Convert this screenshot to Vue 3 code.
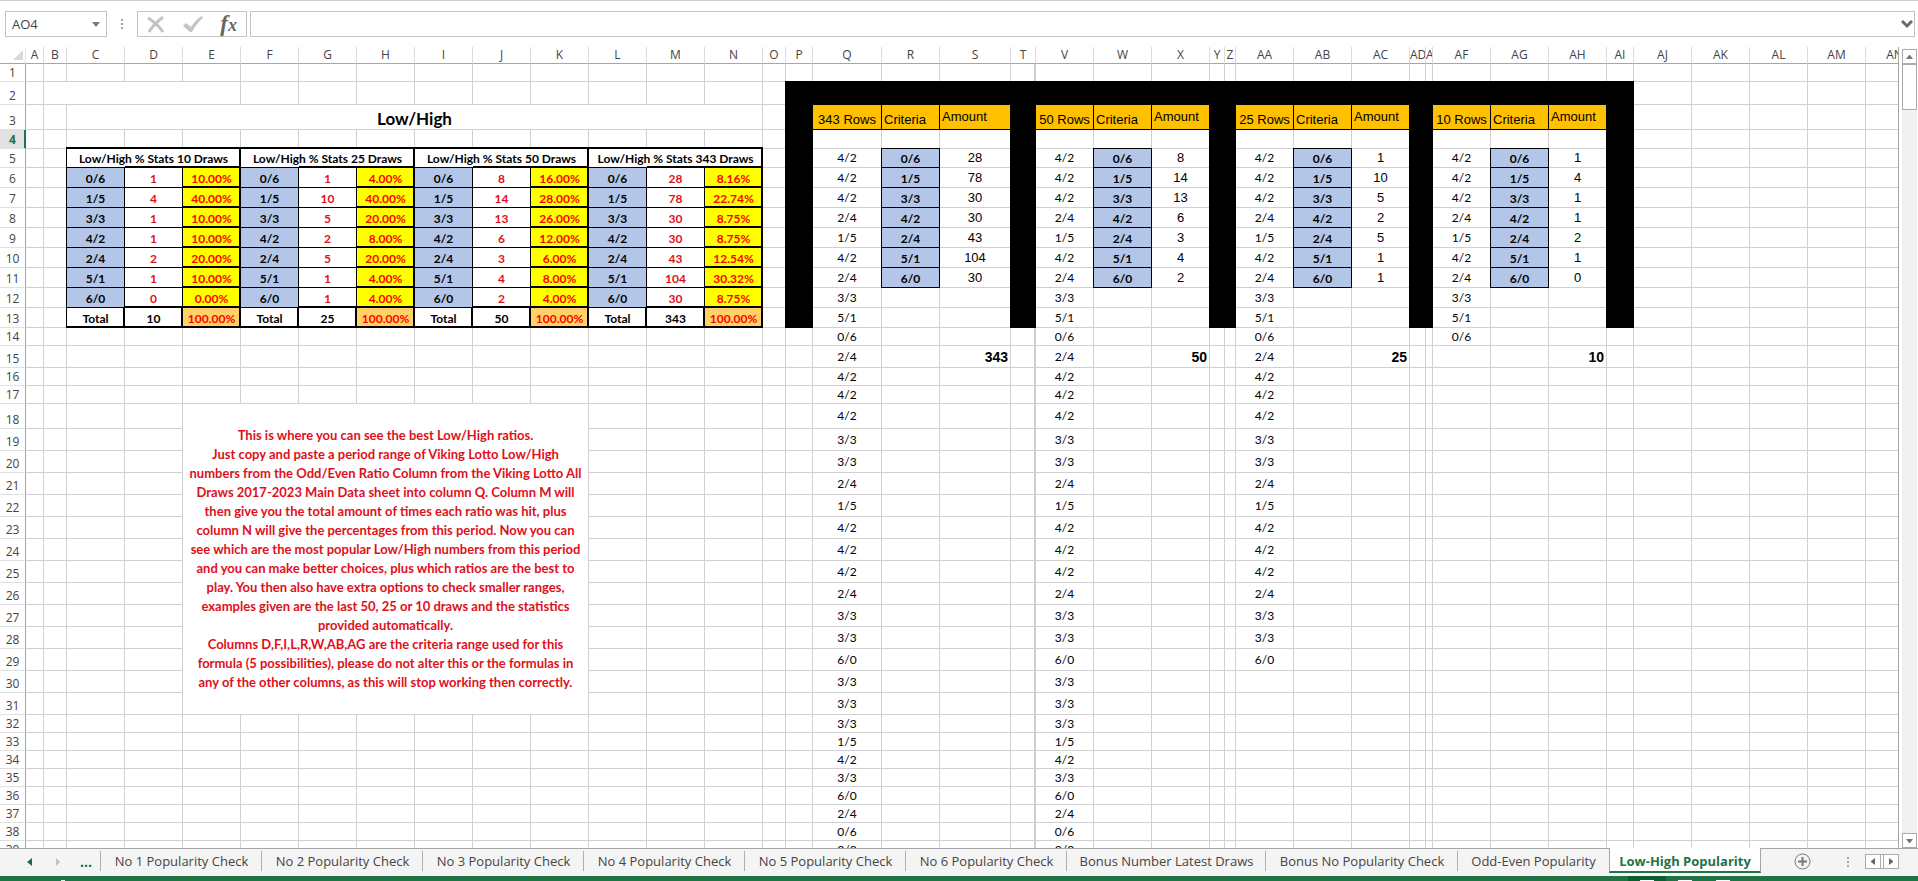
<script setup>
import { ref } from 'vue'

const columns = [
  ['A', 18], ['B', 23], ['C', 58], ['D', 58], ['E', 58], ['F', 58], ['G', 58], ['H', 58],
  ['I', 58], ['J', 58], ['K', 58], ['L', 58], ['M', 58], ['N', 58], ['O', 23], ['P', 27],
  ['Q', 69], ['R', 58], ['S', 71], ['T', 25], ['V', 58], ['W', 58], ['X', 58], ['Y', 15],
  ['Z', 11], ['AA', 58], ['AB', 58], ['AC', 58], ['AD', 16], ['AE', 7], ['AF', 58], ['AG', 58],
  ['AH', 58], ['AI', 27], ['AJ', 58], ['AK', 58], ['AL', 58], ['AM', 58], ['AN', 58],
].map(([name, width]) => ({ name, width }))

const indexOf = Object.fromEntries(columns.map((c, i) => [c.name, i]))

function rowHeight(n) {
  if (n === 2) return 23
  if (n === 3 || n === 18) return 25
  if (n === 4 || n === 5) return 19
  if (n >= 6 && n <= 13) return 20
  if (n === 15 || (n >= 19 && n <= 31)) return 22
  return 18
}

const ratios = ['0/6', '1/5', '3/3', '4/2', '2/4', '5/1', '6/0']

const draws = [
  '4/2', '4/2', '4/2', '2/4', '1/5', '4/2', '2/4', '3/3', '5/1', '0/6', '2/4', '4/2',
  '4/2', '4/2', '3/3', '3/3', '2/4', '1/5', '4/2', '4/2', '4/2', '2/4', '3/3', '3/3',
  '6/0', '3/3', '3/3', '3/3', '1/5', '4/2', '3/3', '6/0', '2/4', '0/6', '3/3',
]

const stats = [
  { cols: ['C', 'D', 'E'], total: 10, counts: [1, 4, 1, 1, 2, 1, 0], shares: ['10.00%', '40.00%', '10.00%', '10.00%', '20.00%', '10.00%', '0.00%'] },
  { cols: ['F', 'G', 'H'], total: 25, counts: [1, 10, 5, 2, 5, 1, 1], shares: ['4.00%', '40.00%', '20.00%', '8.00%', '20.00%', '4.00%', '4.00%'] },
  { cols: ['I', 'J', 'K'], total: 50, counts: [8, 14, 13, 6, 3, 4, 2], shares: ['16.00%', '28.00%', '26.00%', '12.00%', '6.00%', '8.00%', '4.00%'] },
  { cols: ['L', 'M', 'N'], total: 343, counts: [28, 78, 30, 30, 43, 104, 30], shares: ['8.16%', '22.74%', '8.75%', '8.75%', '12.54%', '30.32%', '8.75%'] },
]

const ranges = [
  { cols: ['Q', 'R', 'S'], total: 343, counts: [28, 78, 30, 30, 43, 104, 30], shown: 35 },
  { cols: ['V', 'W', 'X'], total: 50, counts: [8, 14, 13, 6, 3, 4, 2], shown: 35 },
  { cols: ['AA', 'AB', 'AC'], total: 25, counts: [1, 10, 5, 2, 5, 1, 1], shown: 25 },
  { cols: ['AF', 'AG', 'AH'], total: 10, counts: [1, 4, 1, 1, 2, 1, 0], shown: 10 },
]

const note = [
  'This is where you can see the best Low/High ratios.',
  'Just copy and paste a period range of Viking Lotto Low/High',
  'numbers from the Odd/Even Ratio Column from the Viking Lotto All',
  'Draws 2017-2023 Main Data sheet into column Q. Column M will',
  'then give you the total amount of times each ratio was hit, plus',
  'column N will give the percentages from this period. Now you can',
  'see which are the most popular Low/High numbers from this period',
  'and you can make better choices, plus which ratios are the best to',
  'play. You then also have extra options to check smaller ranges,',
  'examples given are the last 50, 25 or 10 draws and the statistics',
  'provided automatically.',
  'Columns D,F,I,L,R,W,AB,AG are the criteria range used for this',
  'formula (5 possibilities), please do not alter this or the formulas in',
  'any of the other columns, as this will stop working then correctly.',
].join('\n')

const cells = {}
function put(col, row, text, kind, colspan = 1, rowspan = 1) {
  const start = indexOf[col]
  for (let r = row; r < row + rowspan; r++) {
    for (let c = start; c < start + colspan; c++) cells[`${r}:${c}`] = null
  }
  cells[`${row}:${start}`] = { text, kind, colspan, rowspan }
}

put('B', 2, '', '', 4)
put('C', 3, 'Low/High', 'title', 12)
put('E', 18, note, 'note', 7, 14)

for (const s of stats) {
  const [a, b, c] = s.cols
  put(a, 5, `Low/High % Stats ${s.total} Draws`, 'stat-head', 3)
  ratios.forEach((ratio, i) => {
    put(a, 6 + i, ratio, 'stat ratio edge-left')
    put(b, 6 + i, s.counts[i], i ? 'stat count' : 'stat count edge-top')
    put(c, 6 + i, s.shares[i], i ? 'stat share' : 'stat share edge-top')
  })
  put(a, 13, 'Total', 'stat total edge-left')
  put(b, 13, s.total, 'stat total edge-top')
  put(c, 13, '100.00%', 'stat total whole')
}

for (const g of ranges) {
  const [a, b, c] = g.cols
  put(a, 3, `${g.total} Rows`, 'range-head centered')
  put(b, 3, 'Criteria', 'range-head')
  put(c, 3, 'Amount', 'range-head raised')
  draws.slice(0, g.shown).forEach((d, i) => put(a, 5 + i, d, 'draw'))
  ratios.forEach((ratio, i) => {
    put(b, 5 + i, ratio, 'stat ratio boxed')
    put(c, 5 + i, g.counts[i], 'amount')
  })
  put(c, 15, g.total, 'sum')
}

put('P', 2, '', 'frame', 19)
for (const col of ['P', 'T', 'Y', 'Z', 'AD', 'AE', 'AI']) {
  for (let r = 3; r <= 13; r++) put(col, r, '', 'frame')
}

const rows = Array.from({ length: 39 }, (_, i) => {
  const number = i + 1
  const list = []
  columns.forEach((col, c) => {
    const cell = cells[`${number}:${c}`]
    if (cell === null) return
    list.push({ key: col.name, text: '', kind: '', colspan: 1, rowspan: 1, ...cell, hidden: col.name === 'T' })
  })
  return { number, height: rowHeight(number), list }
})

const tabs = [
  { name: 'No 1 Popularity Check', width: 161 },
  { name: 'No 2 Popularity Check', width: 161 },
  { name: 'No 3 Popularity Check', width: 161 },
  { name: 'No 4 Popularity Check', width: 161 },
  { name: 'No 5 Popularity Check', width: 161 },
  { name: 'No 6 Popularity Check', width: 161 },
  { name: 'Bonus Number Latest Draws', width: 199 },
  { name: 'Bonus No Popularity Check', width: 192 },
  { name: 'Odd-Even Popularity', width: 151 },
  { name: 'Low-High Popularity', width: 152 },
]
const activeTab = ref('Low-High Popularity')
const cellName = ref('AO4')
const formula = ref('')
</script>

<template>
  <div class="workbook">
    <header class="formula-bar">
      <div class="name-box">
        <input v-model="cellName" type="text" aria-label="Name box" />
        <button type="button" aria-label="Show names">
          <svg width="8" height="5" viewBox="0 0 8 5"><path d="M0 0h8L4 5z" fill="#777" /></svg>
        </button>
      </div>
      <svg class="grip" width="2" height="14" viewBox="0 0 2 14">
        <path d="M0 1h2v2H0zM0 5h2v2H0zM0 9h2v2H0z" fill="#a6a6a6" />
      </svg>
      <div class="edit-tools">
        <button type="button" aria-label="Cancel">
          <svg width="18" height="17" viewBox="0 0 18 17" fill="none" stroke="#c3c3c3" stroke-width="3">
            <path d="M1 2C6 5 12 10 16 16M16 1C11 5 5 10 2 16" />
          </svg>
        </button>
        <button type="button" aria-label="Enter">
          <svg width="20" height="17" viewBox="0 0 20 17"><path d="M0 10l3-3 5 4c3-5 7-9 11-11l1 2c-4 3-8 8-11 14H7z" fill="#c3c3c3" /></svg>
        </button>
        <button type="button" class="fx" aria-label="Insert function"><span>f</span><small>x</small></button>
      </div>
      <div class="formula-box">
        <input v-model="formula" type="text" aria-label="Formula" />
        <button type="button" aria-label="Expand formula bar">
          <svg width="12" height="9" viewBox="0 0 12 9"><path d="M1 1l5 5 5-5" fill="none" stroke="#6b6b6b" stroke-width="3" /></svg>
        </button>
      </div>
    </header>

    <main class="sheet">
      <div class="viewport">
        <table>
          <colgroup>
            <col class="row-col" />
            <col v-for="c in columns" :key="c.name" :style="{ width: c.width + 'px' }" />
          </colgroup>
          <thead>
            <tr>
              <td class="corner"><svg width="10" height="10" viewBox="0 0 10 10"><path d="M10 0v10H0z" fill="#d9d9d9" /></svg></td>
              <th v-for="c in columns" :key="c.name" scope="col">{{ c.name }}</th>
            </tr>
          </thead>
          <tbody>
            <tr v-for="row in rows" :key="row.number" :style="{ height: row.height + 'px' }">
              <th scope="row" :class="{ current: row.number === 4 }">{{ row.number }}</th>
              <td
                v-for="cell in row.list"
                :key="cell.key"
                :colspan="cell.colspan"
                :rowspan="cell.rowspan"
                :class="[cell.kind, { 'hidden-next': cell.hidden }]"
              >{{ cell.text }}</td>
            </tr>
          </tbody>
        </table>
      </div>
      <div class="scrollbar">
        <button type="button" aria-label="Scroll up"><svg width="7" height="4" viewBox="0 0 7 4"><path d="M0 4h7L4 0H3z" fill="#777" /></svg></button>
        <div class="track"><div class="thumb"></div></div>
        <button type="button" aria-label="Scroll down"><svg width="7" height="4" viewBox="0 0 7 4"><path d="M0 0h7L4 4H3z" fill="#777" /></svg></button>
      </div>
    </main>

    <footer>
      <nav class="sheet-bar" aria-label="Sheets">
        <div class="sheet-nav">
          <button type="button" aria-label="Previous sheets"><svg width="5" height="8" viewBox="0 0 5 8"><path d="M5 0v8L0 4z" fill="#1e6b41" /></svg></button>
          <button type="button" aria-label="Next sheets"><svg width="5" height="8" viewBox="0 0 5 8"><path d="M0 0v8l4-4z" fill="#c0c0c0" /></svg></button>
          <button type="button" class="more" aria-label="More sheets">...</button>
        </div>
        <button
          v-for="t in tabs"
          :key="t.name"
          type="button"
          class="tab"
          :class="{ active: t.name === activeTab }"
          :style="{ width: t.width + 'px' }"
          @click="activeTab = t.name"
        ><span>{{ t.name }}</span></button>
        <button type="button" class="add" aria-label="New sheet">
          <svg width="17" height="17" viewBox="0 0 17 17" fill="none" stroke="#777">
            <circle cx="8.500" cy="8.500" r="7.500" /><path d="M4 8.500h9M8.500 4v9" stroke-width="2" />
          </svg>
        </button>
        <div class="bar-end">
          <svg width="3" height="12" viewBox="0 0 3 12"><path d="M0 1h2v2H0zM0 5h2v2H0zM0 9h2v2H0z" fill="#a6a6a6" /></svg>
          <div class="h-scroll">
            <button type="button" aria-label="Scroll left"><svg width="4" height="7" viewBox="0 0 4 7"><path d="M4 0v7L0 4V3z" fill="#666" /></svg></button>
            <i></i>
            <button type="button" aria-label="Scroll right"><svg width="4" height="7" viewBox="0 0 4 7"><path d="M0 0v7l4-3V3z" fill="#666" /></svg></button>
          </div>
        </div>
      </nav>
      <div class="status-bar">
        <svg class="macro" width="6" height="5" viewBox="0 0 6 5"><path d="M1 4h4v1H1z" fill="#e3efe8" /></svg>
        <div class="views"><i class="on"></i><i></i><i></i></div>
      </div>
    </footer>
  </div>
</template>

<style>
body {
  margin: 0;
  overflow: hidden;
}
</style>

<style scoped>
.workbook {
  display: flex;
  flex-direction: column;
  height: 100vh;
  background: #fff;
  color: #444;
  font-family: "Open Sans", "Noto Sans", sans-serif;
  font-size: 12px;
}

button,
input {
  margin: 0;
  padding: 0;
  border: 0;
  background: none;
  color: inherit;
  font: inherit;
}

svg {
  display: block;
}

/* Formula bar */
.formula-bar {
  display: flex;
  box-sizing: border-box;
  height: 47px;
  padding: 10px 3px 10px 5px;
  border-top: 1px solid #cfcfcf;
}

.name-box,
.edit-tools,
.formula-box {
  display: flex;
  align-items: center;
  box-sizing: border-box;
  border: 1px solid #c4c4c4;
}

.name-box {
  width: 102px;
  padding: 0 6px;
  font-size: 13px;
}

.name-box input {
  flex: 1;
  min-width: 0;
}

.grip {
  margin: 7px 14px 0;
}

.edit-tools {
  width: 110px;
  justify-content: space-between;
  padding: 0 9px;
}

.fx {
  display: flex;
  align-items: baseline;
  color: #666;
  font-family: "Liberation Serif", serif;
  font-style: italic;
  font-weight: bold;
  font-size: 23px;
  line-height: 22px;
}

.fx small {
  font-size: 18px;
}

.formula-box {
  flex: 1;
  margin-left: 3px;
  padding-right: 1px;
}

.formula-box input {
  flex: 1;
  font-size: 13px;
}

/* Grid */
.sheet {
  display: flex;
  flex: 1;
  min-height: 0;
}

.viewport {
  flex: 1;
  min-width: 0;
  overflow: hidden;
  box-sizing: border-box;
  border-right: 1px solid #a6a6a6;
}

table {
  table-layout: fixed;
  width: 100%;
  border-spacing: 0;
}

.row-col {
  width: 26px;
}

td,
th {
  box-sizing: border-box;
  padding: 0;
  border: 0 solid #d0d0d0;
  border-width: 0 1px 1px 0;
  line-height: 16px;
  white-space: nowrap;
}

thead tr {
  height: 17px;
}

thead th,
tbody th {
  font-weight: normal;
  color: #444;
}

thead th {
  overflow: hidden;
  border-right-color: #dcdcdc;
  border-bottom-color: #a6a6a6;
}

.corner {
  padding-left: 13px;
  border-right-color: #e4e4e4;
  border-bottom-color: #a6a6a6;
}

tbody th {
  vertical-align: bottom;
  border-right-color: #a6a6a6;
  border-bottom-color: #e0e0e0;
}

tbody th.current {
  background: #e1e1e1;
  color: #217346;
  font-weight: bold;
  border-right-color: #217346;
  box-shadow: inset -1px 0 0 #217346;
}

.hidden-next {
  border-right-width: 2px;
}

.title,
.note,
.stat,
.stat-head {
  font-family: Lato, "Open Sans", sans-serif;
  font-weight: bold;
  text-align: center;
  color: #000;
}

.title {
  font-size: 17px;
  line-height: 20px;
  vertical-align: bottom;
}

.note {
  font-size: 13px;
  line-height: 19px;
  white-space: pre;
  color: #e0101a;
}

.stat,
.stat-head {
  font-size: 12px;
  vertical-align: bottom;
  border-color: #000;
}

.stat-head {
  box-shadow: inset -1px 0 0 #000, 0 -2px 0 #000, -1px 0 0 #000, -1px -2px 0 #000;
}

.ratio {
  background: #b4c6e7;
}

.edge-left {
  box-shadow: -1px 0 0 #000;
}

.edge-top {
  box-shadow: 0 -2px 0 #000;
}

.boxed {
  box-shadow: -1px 0 0 #000, 0 -1px 0 #000, -1px -1px 0 #000;
}

.count {
  color: #e0101a;
}

.share {
  background: #ff0;
  color: #f00;
  box-shadow: inset -1px -1px 0 #000;
}

.share.edge-top {
  box-shadow: inset -1px -1px 0 #000, 0 -2px 0 #000;
}

.total {
  box-shadow: inset -1px -1px 0 #000;
}

.total.edge-left {
  box-shadow: inset -1px -1px 0 #000, -1px 0 0 #000;
}

.total.edge-top {
  box-shadow: inset -1px -1px 0 #000, 0 -2px 0 #000;
}

.whole {
  background: #ffd166;
  color: #f00;
}

.range-head,
.amount,
.sum {
  font-family: "Liberation Sans", Arial, sans-serif;
  font-size: 13px;
  color: #000;
}

.range-head {
  padding: 0 0 1px 2px;
  background: #ffc000;
  border-color: #000;
  vertical-align: bottom;
}

.centered {
  padding-left: 0;
  text-align: center;
}

.raised {
  padding-bottom: 0;
  vertical-align: middle;
}

.draw {
  font-family: Lato, "Open Sans", sans-serif;
  font-size: 12px;
  color: #000;
  text-align: center;
}

.amount {
  text-align: center;
}

.sum {
  padding-right: 2px;
  font-size: 14px;
  font-weight: bold;
  text-align: right;
}

.frame {
  background: #000;
  border-color: #000;
  box-shadow: -1px 0 0 #000, 0 -1px 0 #000, -1px -1px 0 #000;
}

/* Vertical scrollbar */
.scrollbar {
  display: flex;
  flex-direction: column;
  box-sizing: border-box;
  width: 19px;
  padding: 2px 1px 0 3px;
}

.scrollbar button {
  display: flex;
  align-items: center;
  justify-content: center;
  box-sizing: border-box;
  height: 15px;
  border: 1px solid #ababab;
  background: #fff;
}

.track {
  flex: 1;
  background: #f1f1f1;
}

.thumb {
  box-sizing: border-box;
  height: 46px;
  border: 1px solid #ababab;
  background: #fff;
}

/* Sheet tabs */
.sheet-bar {
  display: flex;
  box-sizing: border-box;
  height: 28px;
  padding-right: 19px;
  border-top: 1px solid #a6a6a6;
  background: #f4f4f4;
}

.sheet-nav {
  display: flex;
  align-items: center;
  gap: 24px;
  box-sizing: border-box;
  width: 101px;
  padding: 0 8px 2px 27px;
}

.sheet-nav .more {
  margin-left: -5px;
  color: #1e6b41;
  font-size: 14px;
  font-weight: bold;
  line-height: 18px;
}

.tab {
  display: flex;
  align-items: flex-start;
  padding-top: 2px;
  font-size: 13px;
  white-space: nowrap;
}

.tab span {
  flex: 1;
  box-shadow: -1px 0 0 #b0b0b0;
  line-height: 20px;
}

.tab.active {
  box-sizing: border-box;
  height: 25px;
  margin-top: -1px;
  padding-top: 3px;
  border: 1px solid #a6a6a6;
  border-top: 0;
  border-bottom: 2px solid #217346;
  background: #fff;
  color: #217346;
  font-weight: bold;
}

.tab.active span {
  box-shadow: none;
}

.add {
  margin: 0 0 2px 33px;
}

.bar-end {
  display: flex;
  align-items: center;
  gap: 15px;
  margin-left: auto;
  padding-bottom: 2px;
}

.h-scroll {
  display: flex;
  box-sizing: border-box;
  width: 34px;
  height: 15px;
  border: 1px solid #ababab;
  background: #fff;
}

.h-scroll button {
  display: flex;
  flex: 1;
  align-items: center;
  justify-content: center;
}

.h-scroll i {
  width: 2px;
  border: solid #ababab;
  border-width: 0 1px;
}

.status-bar {
  display: flex;
  justify-content: space-between;
  height: 5px;
  padding: 0 176px 0 60px;
  background: #217346;
}

.views {
  display: flex;
}

.views i {
  box-sizing: border-box;
  width: 38px;
  border: solid transparent;
  border-width: 4px 12px 0;
  background: #fff;
  background-clip: padding-box;
}

.views i.on {
  border-color: #0e5c2f;
}
</style>
